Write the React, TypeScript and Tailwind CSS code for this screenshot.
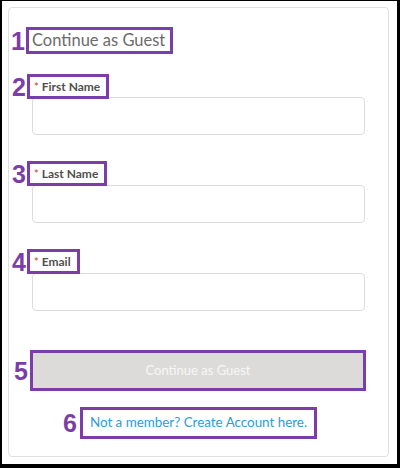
import type { ReactNode } from 'react'

const font = { fontFamily: 'Lato, "Open Sans", sans-serif' }

function Marker({ n, className }: { n: number; className?: string }) {
    // annotation digit hanging to the left of a highlighted box
    return (
        <span
            className={`absolute right-full top-1/2 -translate-y-1/2 font-['Liberation_Sans',sans-serif] text-[25px] font-bold leading-none text-[#7b3ea8] ${className ?? 'mr-[4px]'}`}
        >
            {n}
        </span>
    )
}

function FieldLabel({ n, children, className }: { n: number; children: ReactNode; className?: string }) {
    return (
        <div className={`relative z-10 -ml-[5px] flex h-[25px] items-center self-start border-[3px] border-[#7b3ea8] bg-white pl-[4px] pr-[6px] ${className ?? ''}`}>
            <Marker n={n} />
            <span className="mr-[3px] text-[11px] leading-none text-[#c23934]">*</span>
            <span className="text-[12px] font-bold leading-none text-[#514f4d]">{children}</span>
        </div>
    )
}

function Field({ n, label, labelClass, inputClass }: { n: number; label: string; labelClass?: string; inputClass: string }) {
    return (
        <>
            <FieldLabel n={n} className={labelClass}>{label}</FieldLabel>
            <input
                type="text"
                className={`h-[38px] w-full rounded-[4px] border border-[#dddbda] bg-white px-3 text-sm outline-none ${inputClass}`}
            />
        </>
    )
}

export default function App() {
    return (
        <div className="flex h-[468px] w-[400px] bg-black pb-[4px] pl-[2px] pr-[3px] pt-[1px]" style={font}>
            <div className="flex flex-1 bg-white pb-[7px] pl-[6px] pr-[8px] pt-[6px]">
                <div className="flex flex-1 flex-col rounded-[4px] border border-[#e0e0e0] px-[23px] pt-[19px]">
                    <div className="relative -ml-[6px] flex h-[27px] items-center self-start border-[3px] border-[#7b3ea8] pl-[3px] pr-[5px]">
                        <Marker n={1} />
                        <h2 className="text-[16.5px] leading-none text-[#6b6b6b]">Continue as Guest</h2>
                    </div>

                    <Field n={2} label="First Name" labelClass="mt-[20px]" inputClass="-mt-[2px]" />
                    <Field n={3} label="Last Name" labelClass="mt-[26px]" inputClass="-mt-[1px]" />
                    <Field n={4} label="Email" labelClass="mt-[26px]" inputClass="-mt-[1px]" />

                    <div className="relative -ml-[2px] -mr-[1px] mt-[39px] h-[41px] border-[3px] border-[#7b3ea8]">
                        <Marker n={5} className="mr-[5px]" />
                        <button
                            type="button"
                            disabled
                            className="flex h-full w-full items-center justify-center bg-[#dddbda] text-[13px] text-[#f6f6f6]"
                        >
                            Continue as Guest
                        </button>
                    </div>

                    <div className="relative mt-[16px] flex h-[32px] items-center self-center border-[3px] border-[#7b3ea8] px-[7px]">
                        <Marker n={6} className="mr-[6px]" />
                        <a href="#" className="text-[13.4px] leading-none text-[#2b9be0]">
                            Not a member? Create Account here.
                        </a>
                    </div>
                </div>
            </div>
        </div>
    )
}
